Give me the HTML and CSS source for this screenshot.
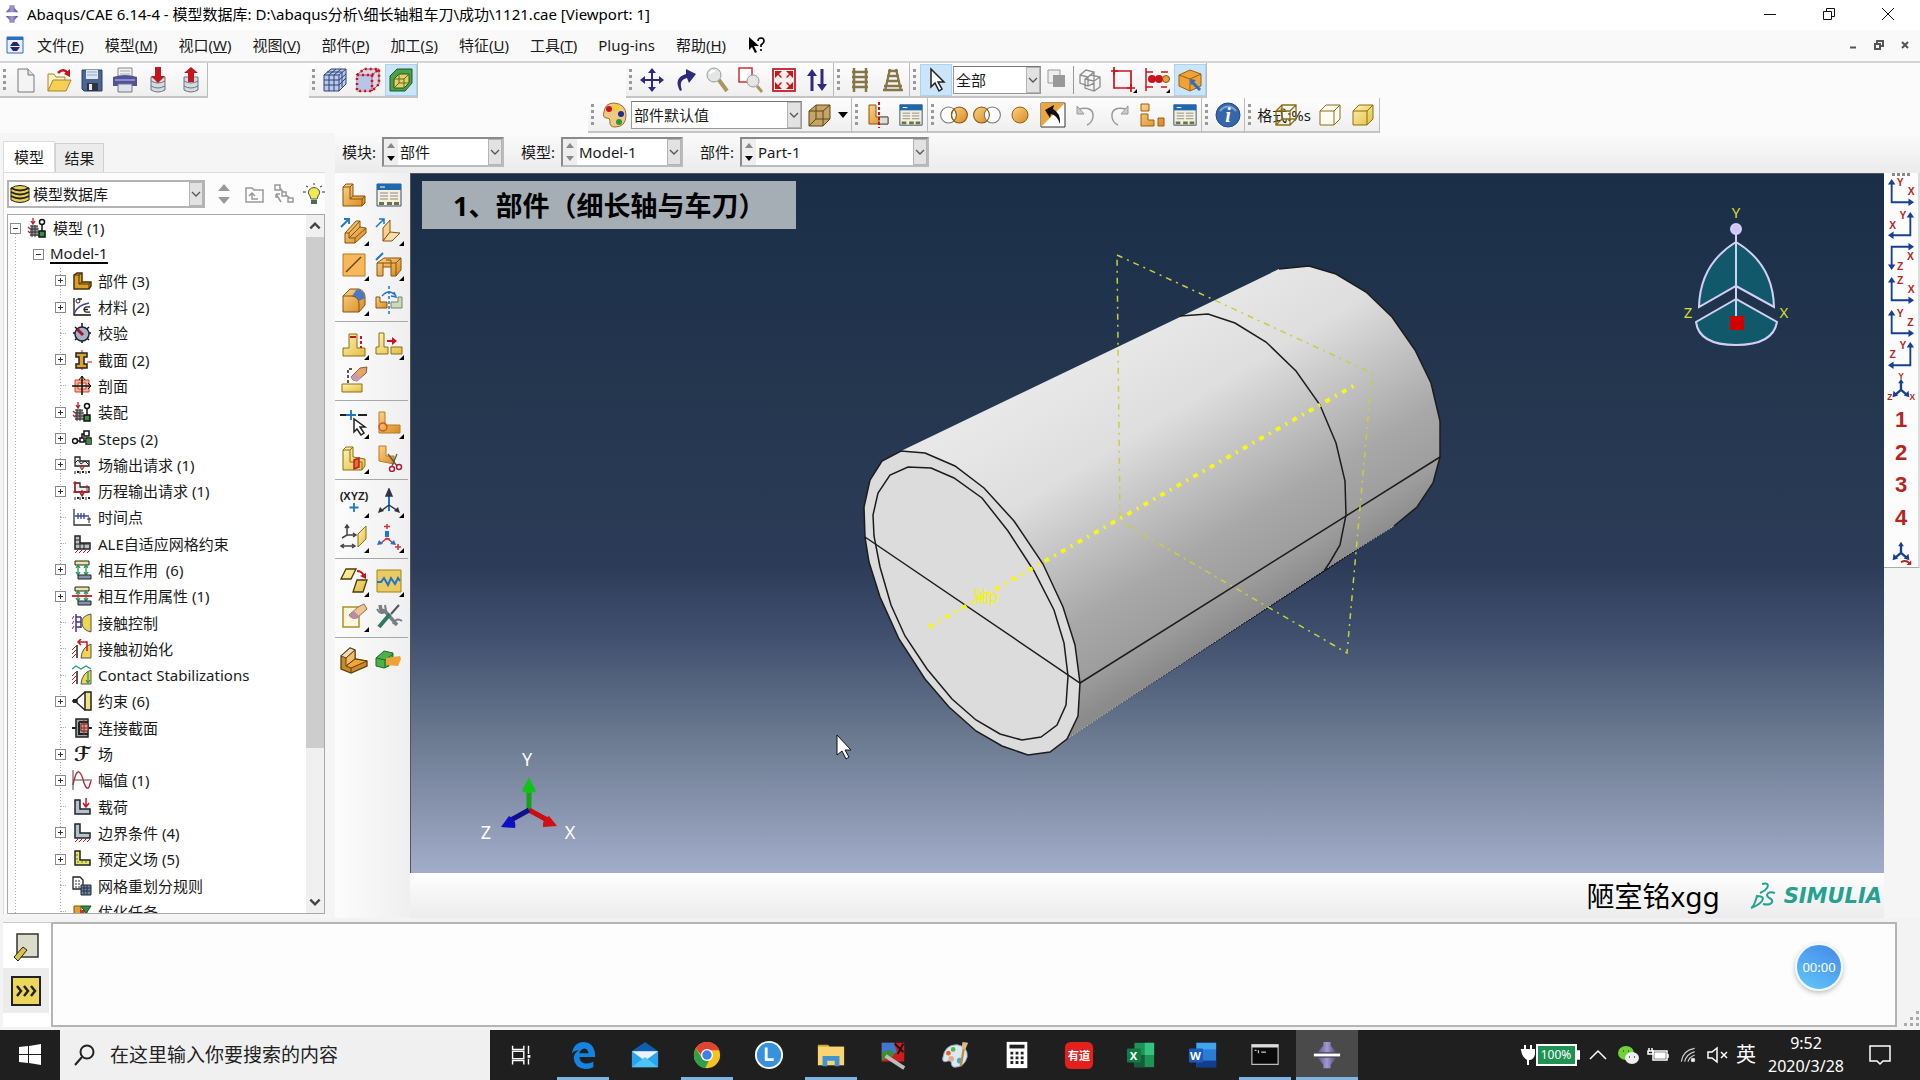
FILE: index.html
```html
<!DOCTYPE html>
<html lang="zh-CN">
<head>
    <meta charset="UTF-8">
    <meta name="viewport" content="width=device-width, initial-scale=1.0">
    <title>Abaqus/CAE 6.14-4</title>
    <link rel="stylesheet" href="styles.css">
</head>
<body>
    <!-- icon sprite -->
    <svg class="sprite" aria-hidden="true">
        <defs>
            <linearGradient id="gold" x1="0" y1="0" x2="1" y2="1"><stop offset="0" stop-color="#fbd38a"/><stop offset="1" stop-color="#d98a1e"/></linearGradient>
            <linearGradient id="yel" x1="0" y1="0" x2="1" y2="1"><stop offset="0" stop-color="#fdf3b0"/><stop offset="1" stop-color="#e3bd45"/></linearGradient>
            <linearGradient id="purple" x1="0" y1="0" x2="1" y2="0"><stop offset="0" stop-color="#5a5390"/><stop offset=".5" stop-color="#a29bd0"/><stop offset="1" stop-color="#4d4780"/></linearGradient>
        </defs>
        <symbol id="abaqus" viewBox="0 0 32 32"><path d="M12 2h8v4l6 7H6l6-7zM6 19h20l-6 7v4h-8v-4l-6-7z" fill="url(#purple)"/><path d="M2 14.500h28v3H2z" class="bar"/></symbol>
        <symbol id="doc-app" viewBox="0 0 18 18"><path d="M1 1h16v16H1z" fill="#e8f0fa" stroke="#2b6cc4"/><path d="M1 1h16v3H1z" fill="#2b6cc4"/><path d="M7 6h4l3 4H4zM4 11h10l-3 4H7z" fill="#2b2670"/></symbol>
        <!-- file toolbar -->
        <symbol id="new" viewBox="0 0 26 26"><path d="M5 2h10l6 6v17H5z" fill="#f4f4f4" stroke="#777"/><path d="M15 2v6h6" fill="#ddd" stroke="#777"/></symbol>
        <symbol id="open" viewBox="0 0 26 26"><path d="M2 24V7h6l2 3h9v4" fill="#fff3c0" stroke="#a78430"/><path d="M2 24l5-11h18l-5 11z" fill="#f6cf55" stroke="#a78430"/><path d="M12 6q6-6 10 1" fill="none" stroke="#c8141c" stroke-width="2.500"/><path d="M24 2v8l-6-3z" fill="#c8141c"/></symbol>
        <symbol id="save" viewBox="0 0 26 26"><path d="M3 3h20v21H5l-2-2z" fill="#4a6494" stroke="#2c3f66"/><path d="M7 3h12v9H7z" fill="#dde6ef"/><path d="M8 5h10M8 8h10" stroke="#8fa5c0"/><path d="M8 16h11v8H8z" fill="#2b3345"/><path d="M10 17h3v6h-3z" fill="#e8e8e8"/></symbol>
        <symbol id="print" viewBox="0 0 26 26"><path d="M6 1h14v10H6z" fill="#f3f3f3" stroke="#888"/><path d="M8 4h10M8 7h10" stroke="#aaa"/><path d="M1 10q12-4 24 0v9H1z" fill="#50539a"/><path d="M3 12h20v2H3z" fill="#8a8dc6"/><path d="M6 17h14v8H6z" fill="#dfe3ef" stroke="#777"/></symbol>
        <symbol id="disk" viewBox="0 0 26 26"><path d="M6 10h14v13q-7 4-14 0z" fill="#d5dae0" stroke="#6b7480"/><path d="M6 14q7 4 14 0M6 19q7 4 14 0" fill="none" stroke="#6b7480"/></symbol>
        <symbol id="db-in" viewBox="0 0 26 26"><use href="#disk"/><path d="M10 0h6v9h4l-7 7-7-7h4z" fill="#c4161c"/></symbol>
        <symbol id="db-out" viewBox="0 0 26 26"><use href="#disk"/><path d="M13 0l7 6h-4v9h-6V6H6z" fill="#c4161c"/></symbol>
        <symbol id="mesh-cube" viewBox="0 0 26 26"><path d="M2 8l7-6h15v15l-7 7H2z" fill="#b9c9e8" stroke="#2d4379"/><path d="M2 8h15v16M17 8l7-6M7 8v16M12 8v16M2 13h15M2 18h15l7-7M7 8l7-6M12 8l7-6M5 5h15v15M17 13l7-6" fill="none" stroke="#2d4379"/></symbol>
        <symbol id="seed-cube" viewBox="0 0 26 26"><path d="M2 8l7-6h15v15l-7 7H2z" fill="#d8d6ea" stroke="#c2435a"/><path d="M2 8h15v16H2z" fill="#b7c6e6"/><path d="M2 8h15v16M17 8l7-6" fill="none" stroke="#c2435a"/><path d="M2 8l7-6h15v15l-7 7H2zM2 8h15v16M17 8l7-6" fill="none" stroke="#c4161c" stroke-width="2.500" stroke-dasharray="2 3"/></symbol>
        <symbol id="green-cube" viewBox="0 0 26 26"><path d="M2 9l7-7h15v14l-7 8H2z" fill="#4ba04b" stroke="#1d5a23"/><path d="M6 12l5-5h10v9l-5 5H6z" fill="#e6cf6a" stroke="#1d5a23"/><path d="M6 12h10v9M16 12l5-5M11 7v9h10M11 16l-5 5" fill="none" stroke="#5c6a20"/></symbol>
        <!-- view toolbar -->
        <symbol id="pan" viewBox="0 0 26 26"><path d="M13 1l4 5h-3v6h6V9l5 4-5 4v-3h-6v6h3l-4 5-4-5h3v-6H6v3l-5-4 5-4v3h6V6H9z" fill="#2e2a7d"/></symbol>
        <symbol id="rotate" viewBox="0 0 26 26"><path d="M8 24Q1 11 14 7V2l10 5-7 9-2-5q-9 2-5 12z" fill="#2e2a7d"/></symbol>
        <symbol id="lens" viewBox="0 0 26 26"><path d="M14 13l8 11" stroke="#a8985c" stroke-width="4"/><circle cx="9" cy="8" r="7" fill="#e4e6e6" stroke="#999"/><path d="M5 7q1-3 5-3" stroke="#fff" stroke-width="2" fill="none"/></symbol>
        <symbol id="zoom-box" viewBox="0 0 26 26"><path d="M1 1h13v14H1z" fill="#fff" stroke="#c8333a" stroke-width="1.500"/><path d="M19 19l5 6" stroke="#a8985c" stroke-width="3"/><circle cx="15" cy="14" r="6" fill="#e4e6e6" stroke="#999"/></symbol>
        <symbol id="fit" viewBox="0 0 26 26"><path d="M2 2h22v22H2z" fill="#fbeeee" stroke="#c8333a" stroke-width="2"/><path d="M4 4h7L8 7l3 3-1 1-3-3-3 3zM22 4v7l-3-3-3 3-1-1 3-3-3-3zM4 22v-7l3 3 3-3 1 1-3 3 3 3zM22 22h-7l3-3-3-3 1-1 3 3 3-3z" fill="#c8141c"/></symbol>
        <symbol id="updown" viewBox="0 0 26 26"><path d="M8 2l5 7H9.500v15h-3V9H3zM18 24l-5-7h3.500V2h3v15H23z" fill="#2e2a7d"/></symbol>
        <symbol id="ladder" viewBox="0 0 26 26"><path d="M7 1v24M19 1v24M5 5h16M5 10h16M5 15h16M5 20h16" stroke="#857647" stroke-width="2.500"/></symbol>
        <symbol id="persp" viewBox="0 0 26 26"><path d="M10 2L5 24M16 2l5 22M8 4h10M7 9h12M6 14h14M4 19h18M3 23h20" stroke="#857647" stroke-width="2.300"/></symbol>
        <symbol id="arrow" viewBox="0 0 26 26"><path d="M8 2v18l4-4 4 8 3-2-4-7h6z" fill="#fff" stroke="#222" stroke-width="1.500"/></symbol>
        <symbol id="layers" viewBox="0 0 26 26"><path d="M4 3h12v13H4z" fill="#eee" stroke="#999"/><path d="M9 8h12v12H9z" fill="#999"/></symbol>
        <symbol id="grey-cube" viewBox="0 0 26 26"><path d="M2 8l6-5 8 2v11l-6 3-8-3zM2 8l8 2v9M10 10l6-5M7 12l6-4 9 2v10l-6 4-9-3zM7 12l9 2v10M16 14l6-4" fill="none" stroke="#8c8c8c" stroke-width="1.300"/></symbol>
        <symbol id="sel-box" viewBox="0 0 26 26"><path d="M3 4h17v17H3z" fill="none" stroke="#c8141c" stroke-width="1.700"/><path d="M3 0v8M-1 4h8M20 17v8M16 21h8" stroke="#c8141c" stroke-width="1.700"/><path d="M26 22v4h-4z"/></symbol>
        <symbol id="sel-pts" viewBox="0 0 26 26"><path d="M2 1v23M2 5h7M17 5h7M2 20h7M17 20h6" stroke="#c8141c" stroke-width="1.500"/><circle cx="8" cy="12" r="4" fill="#c8141c"/><circle cx="15" cy="12" r="4" fill="#c8141c"/><circle cx="22" cy="12" r="3.500" fill="#e5a03c" stroke="#7c5116"/><path d="M26 22v4h-4z"/></symbol>
        <symbol id="gold-cube" viewBox="0 0 26 26"><path d="M2 8l11-5 11 4v12l-11 5-11-5z" fill="#efa237" stroke="#9a5f12"/><path d="M2 8l11 4 11-5M13 12v12" fill="none" stroke="#9a5f12"/><path d="M23 23l-8-8" stroke="#2b6cc4" stroke-width="3"/><path d="M13 12l6 1-5 5z" fill="#2b6cc4"/></symbol>
        <!-- colour and display toolbar -->
        <symbol id="palette" viewBox="0 0 26 26"><path d="M3 10Q4 1 13 1q12 1 12 12 0 12-11 12-6 0-5-6 0-3-3-3-5 0-3-6z" fill="#efc886" stroke="#9b6d2d"/><circle cx="8" cy="7" r="3" fill="#c8141c"/><circle cx="15" cy="6" r="3" fill="#f0d21c"/><circle cx="20" cy="12" r="3" fill="#1f2d8a"/><circle cx="18" cy="20" r="3" fill="#2e9a35"/></symbol>
        <symbol id="tan-cube" viewBox="0 0 26 26"><path d="M3 9l7-6h14v14l-7 7H3z" fill="#c5a468" stroke="#5f4517"/><path d="M3 9h14v15M17 9l7-6M10 3v14h14M10 17l-7 7" fill="none" stroke="#5f4517"/></symbol>
        <symbol id="part-cut" viewBox="0 0 26 26"><path d="M4 3h7v12h12v7H4z" fill="url(#gold)" stroke="#85540f"/><path d="M14 15h9v7h-9z" fill="#ddd" stroke="#555"/><path d="M14 0v26" stroke="#c8141c" stroke-width="2" stroke-dasharray="3 2"/></symbol>
        <symbol id="table" viewBox="0 0 28 26"><path d="M2 2h24v22H2z" fill="#f4f1d8" stroke="#34506b"/><path d="M2 2h24v6H2z" fill="#1d68b0"/><path d="M5 5h5" stroke="#fff"/><path d="M5 11h8M15 11h8M5 14h8M15 14h8M5 17h8M15 17h8" stroke="#889"/><path d="M4 20h5v3H4zM12 20h5v3h-5zM19 20h5v3h-5z" fill="#6d7048"/></symbol>
        <symbol id="bool-r" viewBox="0 0 28 26"><circle cx="9" cy="13" r="7.500" fill="#fff" stroke="#777"/><circle cx="19" cy="13" r="7.500" fill="url(#gold)" stroke="#85540f"/><path d="M14 7.500q4.500 5.500 0 11-4.500-5.500 0-11" fill="#fff" stroke="#85540f"/></symbol>
        <symbol id="bool-l" viewBox="0 0 28 26"><circle cx="9" cy="13" r="7.500" fill="url(#gold)" stroke="#85540f"/><circle cx="19" cy="13" r="7.500" fill="#fff" stroke="#777"/><path d="M14 7.500q4.500 5.500 0 11" fill="none" stroke="#85540f"/></symbol>
        <symbol id="ball" viewBox="0 0 26 26"><circle cx="13" cy="13" r="8" fill="url(#gold)" stroke="#9a5f12"/></symbol>
        <symbol id="swap" viewBox="0 0 26 26"><path d="M1 1h24v24H1z" fill="#fff" stroke="#333"/><path d="M1 1h24L1 25z" fill="#eda53c"/><path d="M5 8l9-5-1 4q8 4 7 15-3-9-9-10l-1 4z" fill="#111"/></symbol>
        <symbol id="undo" viewBox="0 0 26 26"><path d="M6 7q15-3 14 8-1 6-6 8" fill="none" stroke="#999" stroke-width="1.500"/><path d="M4 4v8h7z" fill="#ccc" stroke="#999"/></symbol>
        <symbol id="redo" viewBox="0 0 26 26"><path d="M20 7Q5 4 6 15q1 6 6 8" fill="none" stroke="#999" stroke-width="1.500"/><path d="M22 4v8h-7z" fill="#ccc" stroke="#999"/></symbol>
        <symbol id="blocks" viewBox="0 0 26 26"><path d="M2 2h8v7H2zM2 12h7v6h6v6H2zM19 16h6v8h-6z" fill="url(#gold)" stroke="#9a5f12"/></symbol>
        <symbol id="info" viewBox="0 0 26 26"><circle cx="13" cy="13" r="12" fill="#3566ac" stroke="#214a86"/><path d="M5 9q8-9 16 0" fill="none" stroke="#7fa4d8" stroke-width="2"/></symbol>
        <symbol id="wire-gold" viewBox="0 0 26 26"><path d="M3 9l6-6h14v14l-6 6H3zM3 9h14v14M17 9l6-6M9 3v14h14M9 17l-6 6" fill="none" stroke="#8c6f10" stroke-width="1.300"/></symbol>
        <symbol id="white-cube" viewBox="0 0 26 26"><path d="M3 9l6-6h14v14l-6 6H3z" fill="#fdfdf3" stroke="#8c6f10"/><path d="M3 9h14v14M17 9l6-6" fill="none" stroke="#8c6f10"/></symbol>
        <symbol id="yel-cube" viewBox="0 0 26 26"><path d="M3 9l6-6h14v14l-6 6H3z" fill="url(#yel)" stroke="#8c6f10"/><path d="M3 9h14v14M17 9l6-6" fill="none" stroke="#8c6f10"/></symbol>
        <!-- left tree -->
        <symbol id="db" viewBox="0 0 22 22"><path d="M2 5q9-5 18 0v12q-9 5-18 0z" fill="#e9d04e" stroke="#222"/><path d="M2 5q9 5 18 0M2 9q9 5 18 0M2 13q9 5 18 0" fill="none" stroke="#222" stroke-width="1.800"/></symbol>
        <symbol id="folder-up" viewBox="0 0 22 22"><path d="M3 19V5h6l2 2h9v12z" fill="none" stroke="#999" stroke-width="1.500"/><path d="M15 16H9v-5M6 13l3-3 3 3" fill="none" stroke="#999" stroke-width="1.500"/></symbol>
        <symbol id="nodes" viewBox="0 0 22 22"><path d="M2 2h5v5H2zM9 9h4v4H9zM15 15h5v4h-5zM7 5l3 4M13 12l4 3M3 11l5 8M3 11v4M3 11h4" fill="none" stroke="#999" stroke-width="1.500"/></symbol>
        <symbol id="bulb" viewBox="0 0 22 22"><path d="M7 13q-3-3-1-6 5-5 10 0 2 3-1 6l-1 3H8z" fill="#f2ea52" stroke="#555"/><path d="M8 17h6v4H8z" fill="#4c6b57"/><path d="M11 0v2M3 3l2 1M19 3l-2 1M0 9h3M19 9h3" stroke="#333"/></symbol>
        <symbol id="i-asm" viewBox="0 0 20 20"><path d="M5 8h6v10H3v-8z" fill="#999"/><path d="M3 8h8M3 11h9M3 14h9M3 17h9M5 7v12M8 7v12" stroke="#333"/><path d="M6 0v5M4 3l2 3 2-3M1 9l2 2M1 13l2 2" stroke="#b3202b" fill="none" stroke-width="1.300"/><path d="M12 13h6v6h-6z" fill="#3d8a44" stroke="#111" stroke-width="1.500"/><path d="M15 7v6" stroke="#111" stroke-width="1.500"/><circle cx="15" cy="4" r="2.500" fill="#fff" stroke="#111" stroke-width="1.500"/></symbol>
        <symbol id="i-part" viewBox="0 0 20 20"><path d="M2 4l3-2h5v9h9v4l-2 3H2z" fill="#d9a02c" stroke="#4b3206" stroke-width="1.500"/><path d="M2 4h5v9h10v5M7 4l3-2M7 13l3-2M17 13l2-2" fill="none" stroke="#4b3206"/></symbol>
        <symbol id="i-mat" viewBox="0 0 20 20"><path d="M2 1v17h17" fill="none" stroke="#111" stroke-width="1.300"/><path d="M2 17Q5 8 17 6" fill="none" stroke="#38449a" stroke-width="1.300"/><circle cx="6" cy="4" r="2" fill="none" stroke="#222"/><path d="M6 2h4M18 10q-6-1-6 2.500t6 2.500M12 12.500h4" fill="none" stroke="#222" stroke-width="1.300"/></symbol>
        <symbol id="i-cal" viewBox="0 0 20 20"><path d="M10 0v20M1 10h18M3 4l14 13M17 4L3 17" stroke="#111" stroke-width="1.500"/><circle cx="10" cy="11" r="7" fill="#a7b1c6" stroke="#1d2333" stroke-width="1.500"/><path d="M5 6l6 6" stroke="#a01430" stroke-width="3"/></symbol>
        <symbol id="i-sec" viewBox="0 0 20 20"><path d="M10 0v20M15 12h5" stroke="#c8141c"/><path d="M4 3h11v4h-3v7h3v4H4v-4h3V7H4z" fill="#dfa22f" stroke="#222" stroke-width="1.500"/></symbol>
        <symbol id="i-prof" viewBox="0 0 20 20"><path d="M3 4h14v12H3z" fill="#f7b29b" stroke="#d0452a"/><path d="M6 7h8v6H6z" fill="#f7dccf" stroke="#d0452a"/><path d="M10 0v19M0 10h19" stroke="#111" stroke-width="1.500"/><path d="M7 4l3-4 3 4M16 7l3 3-3 3" fill="none" stroke="#111"/></symbol>
        <symbol id="i-steps" viewBox="0 0 20 20"><circle cx="3" cy="12" r="2.500" fill="#fff" stroke="#111" stroke-width="1.500"/><path d="M6 12h2M8 9h4v4H8zM10 9V5h2M12 2h5v5h-5zM12 12h2M14 9h5v6h-5z" fill="none" stroke="#111" stroke-width="1.500"/><path d="M15 10h4v5h-4z" fill="#3d8a44"/></symbol>
        <symbol id="i-field" viewBox="0 0 20 20"><path d="M3 2h5v4h9v5H3z" fill="#eee" stroke="#222" stroke-width="1.300"/><path d="M3 8l3-3 3 4 4-3 4 4" fill="none" stroke="#222"/><path d="M10 10v4M8 12l2 3 2-3" stroke="#c8141c" fill="none"/><path d="M3 16v3M8 16v3M14 16v3" stroke="#222"/><path d="M5 17h2M10 17h2M16 17h2" stroke="#222" stroke-width="2"/></symbol>
        <symbol id="i-hist" viewBox="0 0 20 20"><path d="M3 2h5v4h9v5H3z" fill="#eee" stroke="#222" stroke-width="1.300"/><path d="M1 2h5M3 0v12M1 11h16M15 4v8" stroke="#c8141c"/><path d="M10 9v6M8 12l2 3 2-3" stroke="#c8141c" fill="none" stroke-width="1.300"/><path d="M3 16v3M8 16v3M14 16v3" stroke="#222"/><path d="M5 17h2M10 17h2M16 17h2" stroke="#222" stroke-width="2"/></symbol>
        <symbol id="i-time" viewBox="0 0 20 20"><path d="M2 2v16h17" fill="none" stroke="#333" stroke-width="1.300"/><path d="M3 9h14M6 6v6M9 6v6M12 6v6" stroke="#38449a" stroke-width="1.300"/><path d="M17 10v6M15 12h4" stroke="#222"/></symbol>
        <symbol id="i-ale" viewBox="0 0 20 20"><path d="M3 2h5v7h10v6H3z" fill="#b9c0c8" stroke="#222" stroke-width="1.500"/><path d="M3 6h5M3 10h14M8 9v6M12 9v6" stroke="#222"/><path d="M3 19l3-3M7 19l3-3M11 19l3-3M15 19l3-3" stroke="#c8141c"/></symbol>
        <symbol id="i-int" viewBox="0 0 20 20"><path d="M3 1h14v4H3z" fill="#efe3a5" stroke="#222"/><path d="M6 5v10M14 5v10M4 8l2-3 2 3M12 8l2-3 2 3M4 12l2 3 2-3M12 12l2 3 2-3" stroke="#1f9a54" fill="none" stroke-width="1.300"/><path d="M6 15h13v4H6z" fill="#7f93ad" stroke="#222"/></symbol>
        <symbol id="i-intp" viewBox="0 0 20 20"><use href="#i-int"/><path d="M0 10h20" stroke="#c8333a" stroke-width="2"/></symbol>
        <symbol id="i-cctl" viewBox="0 0 20 20"><path d="M2 3L0 6M2 8l-2 3M2 13l-2 3" stroke="#c8141c"/><path d="M4 1v18M4 4h5M4 9h5M4 14h5M9 4v11" stroke="#40368f" stroke-width="1.500"/><path d="M19 1q-10 2-9 9 0 7 9 9z" fill="#efd64c" stroke="#555"/></symbol>
        <symbol id="i-cinit" viewBox="0 0 20 20"><path d="M4 7l-4 4M4 11l-4 4M4 15l-4 4" stroke="#c8141c"/><path d="M5 6v13" stroke="#222" stroke-width="1.500"/><path d="M19 5q-9 3-10 14h10z" fill="#efd64c" stroke="#555"/><path d="M15 12V3H6M9 0L6 3l3 3" fill="none" stroke="#c8141c" stroke-width="1.500"/></symbol>
        <symbol id="i-cstab" viewBox="0 0 20 20"><path d="M4 7l-4 4M4 11l-4 4M4 15l-4 4" stroke="#c8141c"/><path d="M5 6v13" stroke="#222" stroke-width="1.500"/><path d="M19 5q-9 3-10 14h10z" fill="#efd64c" stroke="#555"/><path d="M0 4l4-3 5 3 5-3 5 3M16 6v12M14 15l2 3 2-3" fill="none" stroke="#2a9a6c" stroke-width="1.300"/></symbol>
        <symbol id="i-con" viewBox="0 0 20 20"><path d="M13 1h6v18h-6z" fill="#f0e57c" stroke="#222" stroke-width="1.500"/><path d="M13 1L5 8v4l8 7M0 10h5" fill="none" stroke="#222" stroke-width="1.500"/><path d="M1 8h4v4H1z" fill="#222"/></symbol>
        <symbol id="i-conn" viewBox="0 0 20 20"><path d="M4 1h12v18H4z" fill="#9ba7a8" stroke="#222" stroke-width="1.500"/><path d="M0 10h4M16 10h4M7 4h9M7 4v12h9" stroke="#222" stroke-width="2" fill="none"/><path d="M9 6h7v7H9z" fill="#c9a096" stroke="#7a1a14"/><path d="M12 2v15M9 10h8" stroke="#a02018"/></symbol>
        <symbol id="i-amp" viewBox="0 0 20 20"><path d="M1 0v20M1 10h19" stroke="#444"/><path d="M1 15Q4 0 7 2q3 2 5 11 3 8 5 4l2-6" fill="none" stroke="#b5303e" stroke-width="1.500"/></symbol>
        <symbol id="i-load" viewBox="0 0 20 20"><path d="M3 3h5v9h10v5H3z" fill="#b4c2cf" stroke="#222" stroke-width="1.500"/><path d="M14 1v8M11 6l3 4 3-4" fill="none" stroke="#c8141c" stroke-width="1.500"/></symbol>
        <symbol id="i-bc" viewBox="0 0 20 20"><path d="M3 1h5v9h10v5H3z" fill="#b4c2cf" stroke="#222" stroke-width="1.500"/><path d="M3 19l3-3M7 19l3-3M11 19l3-3M15 19l3-3" stroke="#c8141c"/></symbol>
        <symbol id="i-pre" viewBox="0 0 20 20"><path d="M3 2h5v9h10v5H3z" fill="#e8e36a" stroke="#222" stroke-width="1.500"/><path d="M5 5v8h10" fill="none" stroke="#3d8a44" stroke-dasharray="2 2"/></symbol>
        <symbol id="i-remesh" viewBox="0 0 20 20"><path d="M1 1h7l3 3v9H1z" fill="#fff" stroke="#222" stroke-width="1.300"/><path d="M3 5h6M3 8h6M3 11h6" stroke="#333" stroke-dasharray="2 1"/><path d="M9 9h10v10H9z" fill="#6f86a6" stroke="#222"/><path d="M9 12h10M9 15h10M12 9v10M15 9v10" stroke="#23304a"/></symbol>
        <symbol id="i-opt" viewBox="0 0 20 20"><path d="M2 4h7v16H2z" fill="#dfa22f" stroke="#8a4d0b"/><path d="M8 8v12h4V8z" fill="#c8333a"/><path d="M9 4h10l-4 6v10h-2V10z" fill="#3d8a44" stroke="#1c4a22"/></symbol>
        <!-- toolbox -->
        <symbol id="b-part" viewBox="0 0 28 28"><path d="M3 6l3-3h7v12h12v7l-3 3H3z" fill="url(#gold)" stroke="#85540f"/><path d="M3 6h7v12h12v7M10 6l3-3M10 18l3-3M22 18l3-3" fill="none" stroke="#85540f"/></symbol>
        <symbol id="b-ext" viewBox="0 0 28 28"><path d="M5 17l11-12h4v6l6 1v5L15 27H5z" fill="url(#gold)" stroke="#85540f"/><path d="M5 17h4v5h6v5M9 17l11-12M9 22L20 11M15 22l11-10" fill="none" stroke="#85540f"/><path d="M1 11l8-8M4 3h5v5" fill="none" stroke="#1e76c8" stroke-width="1.800"/></symbol>
        <symbol id="b-shell" viewBox="0 0 28 28"><path d="M8 12l7-8v12l-7 9z" fill="#f8d090" stroke="#85540f"/><path d="M8 25l7-9 10 1-8 8z" fill="#fbdcac" stroke="#85540f"/><path d="M1 11l8-8M4 3h5v5" fill="none" stroke="#1e76c8" stroke-width="1.500"/></symbol>
        <symbol id="b-wire" viewBox="0 0 28 28"><path d="M3 3h22v22H3z" fill="#f6b85a" stroke="#b87a25"/><path d="M6 21L21 6" stroke="#6b4410" stroke-width="1.500"/></symbol>
        <symbol id="b-cut" viewBox="0 0 28 28"><path d="M2 12l7-5h17v12l-5 6h-5v-9H8v9H2z" fill="url(#gold)" stroke="#85540f"/><path d="M2 12h19v13M21 12l5-5M8 16V12M16 16V9h-5" fill="none" stroke="#85540f"/><path d="M1 9l7-7" stroke="#1e76c8" stroke-width="2"/></symbol>
        <symbol id="b-round" viewBox="0 0 28 28"><path d="M3 10l7-7h9q6 2 6 8v8l-6 7H3z" fill="url(#gold)" stroke="#85540f"/><path d="M12 10l5-7q7 1 8 9l-6 3q-2-4-7-5z" fill="#4c78c8"/><path d="M3 10h9q7 1 7 8v8" fill="none" stroke="#85540f"/></symbol>
        <symbol id="b-mirror" viewBox="0 0 28 28"><path d="M1 11h4v5h7v6H1z" fill="url(#gold)" stroke="#85540f"/><path d="M27 11h-4v5h-7v6h11z" fill="#cfd8b8" stroke="#6a8a6a"/><path d="M14 0v28" stroke="#1e76c8" stroke-width="1.500" stroke-dasharray="3 2"/><path d="M7 10q7-8 14 0M19 6l2 5-5-1" fill="none" stroke="#1e76c8" stroke-width="1.500"/></symbol>
        <symbol id="b-p1" viewBox="0 0 28 28"><path d="M9 4h8v14h8v8H3v-8h6z" fill="url(#yel)" stroke="#8c6f10"/><path d="M10 7h6" stroke="#c8141c" stroke-width="2"/><path d="M21 6v12" stroke="#c8141c" stroke-width="2" stroke-dasharray="3 2"/></symbol>
        <symbol id="b-p2" viewBox="0 0 28 28"><path d="M4 3h5v14h4v7H1v-7h3zM16 17h11v7H16z" fill="url(#yel)" stroke="#8c6f10"/><path d="M12 11h6" stroke="#c8141c" stroke-width="2"/><path d="M17 7l5 4-5 4z" fill="#c8141c"/></symbol>
        <symbol id="b-p3" viewBox="0 0 28 28"><path d="M2 19h20v8H2z" fill="url(#yel)" stroke="#8c6f10"/><path d="M8 18V4h6" fill="none" stroke="#222" stroke-dasharray="3 2" stroke-width="1.500"/><path d="M11 12l9-9 7-1-1 6-9 8q-5 0-6-4z" fill="#e9a468" stroke="#8a5a3a"/><path d="M11 12l5-4 5 5-4 3q-5 0-6-4z" fill="#c79ab8"/></symbol>
        <symbol id="b-datum" viewBox="0 0 28 28"><path d="M0 6h6M18 6h9" stroke="#222" stroke-width="1.800"/><path d="M11 1v10M6 6h10" stroke="#1e76c8" stroke-width="1.800"/><path d="M14 10v13l3-3 4 6 3-2-4-6h5z" fill="#fff" stroke="#222" stroke-width="1.500"/></symbol>
        <symbol id="b-fillet" viewBox="0 0 28 28"><path d="M4 3h6v13h15v8H4z" fill="url(#gold)" stroke="#b87a25"/><circle cx="8" cy="18" r="4" fill="none" stroke="#d0561e" stroke-width="1.500"/></symbol>
        <symbol id="b-lface" viewBox="0 0 28 28"><path d="M3 6l3-3h7v10l12 2v7l-3 4H3z" fill="url(#yel)" stroke="#8c6f10"/><path d="M3 6h7v12h12v8M10 6l3-3" fill="none" stroke="#8c6f10"/><path d="M14 16l5-2v9l-5 2z" fill="#e86a33" stroke="#b3202b" stroke-width="1.500"/></symbol>
        <symbol id="b-scis" viewBox="0 0 28 28"><path d="M4 2h7v10h8v8L4 17z" fill="url(#gold)" stroke="#b87a25"/><path d="M13 10l9 12M22 10l-5 12" stroke="#555" stroke-width="1.300"/><circle cx="17" cy="25" r="2.500" fill="none" stroke="#a8213c" stroke-width="1.500"/><circle cx="24" cy="23" r="2.500" fill="none" stroke="#a8213c" stroke-width="1.500"/></symbol>
        <symbol id="b-axis" viewBox="0 0 28 28"><path d="M14 3v20" stroke="#1e76c8" stroke-width="2"/><path d="M14 1l3 7h-6zM14 17L6 23M14 17l9 6" stroke="#334" stroke-width="1.500" fill="#334"/><path d="M3 25l2-6 4 4zM25 25l-2-6-4 4z" fill="#333"/></symbol>
        <symbol id="b-plane" viewBox="0 0 28 28"><path d="M7 12V4M7 12l-5 3M7 12h8M5 5l2-3 2 3M13 10l3 2-3 2M2 23h12M4 21l-3 2 3 2M12 21l3 2-3 2" stroke="#444" stroke-width="1.500" fill="none"/><path d="M18 11l8-8v13l-8 8z" fill="url(#yel)" stroke="#8c6f10"/></symbol>
        <symbol id="b-csys" viewBox="0 0 28 28"><path d="M12 1v5M9 3.500h6M10 16h5M20 24h6M23 21v6" stroke="#d8323c" stroke-width="1.500"/><path d="M12 8v6" stroke="#1e76c8" stroke-width="4"/><path d="M12 15L5 21M12 15l7 6" stroke="#d8323c" stroke-width="1.500"/><path d="M2 22l2-5 4 4zM21 22l-2-5-4 4z" fill="#1e76c8"/></symbol>
        <symbol id="b-copy" viewBox="0 0 28 28"><path d="M6 2h10l-5 10H1zM17 13h10l-4 12H13z" fill="url(#yel)" stroke="#4b3c06" stroke-width="1.300"/><path d="M17 4q5 0 7 5" fill="none" stroke="#c8141c" stroke-width="2"/><path d="M26 6v6l-6-3z" fill="#c8141c"/></symbol>
        <symbol id="b-wave" viewBox="0 0 28 28"><path d="M2 3h24v22H2z" fill="#ecca62" stroke="#a08020"/><path d="M2 15h4l3-4 4 7 3-7 4 6 3-6 2 3" fill="none" stroke="#1e76c8" stroke-width="2"/></symbol>
        <symbol id="b-erase" viewBox="0 0 28 28"><path d="M3 5h16v20H3z" fill="#fff8df" stroke="#b08d2b" stroke-width="1.500"/><path d="M9 13l9-8 6-3 3 5-10 9q-6 1-8-3z" fill="#edc68e" stroke="#98704a"/><path d="M9 13l5-4 5 5-3 3q-5 0-7-4z" fill="#b88ab0"/></symbol>
        <symbol id="b-tools" viewBox="0 0 28 28"><path d="M5 3l1 5 4 1 12 14" stroke="#777f85" stroke-width="3.500" fill="none"/><path d="M2 7q4 7 9 2l-1-6M18 22q3-7 9-3" stroke="#777f85" stroke-width="2" fill="none"/><path d="M24 3l-8 9" stroke="#555" stroke-width="2"/><path d="M15 12L4 25" stroke="#2f7a62" stroke-width="4"/></symbol>
        <symbol id="b-l3d" viewBox="0 0 28 28"><path d="M1 10l9-8 5 2v9l12 2v5L11 27 1 23z" fill="#c98a2b" stroke="#5f3f0c" stroke-width="1.300"/><path d="M1 10l9-8 5 2-9 8z" fill="#e9dcc0" stroke="#5f3f0c"/><path d="M6 12l9-8v9l-9 7z" fill="#f1bd6b" stroke="#5f3f0c"/><path d="M6 20l9-7 12 2-16 7z" fill="#f5a535" stroke="#5f3f0c"/><path d="M11 22v5" stroke="#5f3f0c"/></symbol>
        <symbol id="b-green" viewBox="0 0 28 28"><path d="M1 12l8-7 9 2v7l-4 1v5l-5 2-8-2z" fill="#4fb04a" stroke="#1f6a25"/><path d="M1 12l9 2v8M10 14l8-6" fill="none" stroke="#1f6a25"/><path d="M11 12l14-2 1 3-3 7-12-1z" fill="#efa237"/></symbol>
        <!-- view directions -->
        <symbol id="ax-ne" viewBox="0 0 30 30"><path d="M5 5v21h19" fill="none" stroke="#173f92" stroke-width="2"/><path d="M5 1l4 6H1zM29 26l-6 4v-8z" fill="#173f92"/></symbol>
        <symbol id="ax-nw" viewBox="0 0 30 30"><path d="M25 5v21H6" fill="none" stroke="#173f92" stroke-width="2"/><path d="M25 1l4 6h-8zM1 26l6 4v-8z" fill="#173f92"/></symbol>
        <symbol id="ax-se" viewBox="0 0 30 30"><path d="M5 25V4h19" fill="none" stroke="#173f92" stroke-width="2"/><path d="M5 29l4-6H1zM29 4l-6 4V0z" fill="#173f92"/></symbol>
        <symbol id="ax-iso" viewBox="0 0 30 30"><path d="M15 17V9M15 17l-6 5M15 17l6 5" stroke="#173f92" stroke-width="2.500"/><path d="M15 5l3 5h-6zM6 25l1-7 5 5zM24 25l-1-7-5 5z" fill="#173f92"/></symbol>
        <symbol id="chev" viewBox="0 0 12 12"><path d="M2 4l4 4 4-4" fill="none" stroke="#555" stroke-width="1.300"/></symbol>
        <symbol id="more" viewBox="0 0 5 5"><path d="M5 0v5H0z"/></symbol>
    </svg>

    <header class="titlebar">
        <svg class="app-icon dark"><use href="#abaqus"/></svg>
        <span>Abaqus/CAE 6.14-4 - 模型数据库: D:\abaqus分析\细长轴粗车刀\成功\1121.cae [Viewport: 1]</span>
        <div class="win-buttons">
            <button aria-label="最小化"><svg viewBox="0 0 14 14"><path d="M1 7.500h12"/></svg></button>
            <button aria-label="还原"><svg viewBox="0 0 14 14"><path d="M1.500 4.500h8v8h-8zM4.500 4V1.500h8v8H10"/></svg></button>
            <button aria-label="关闭"><svg viewBox="0 0 14 14"><path d="M1 1l12 12M13 1L1 13"/></svg></button>
        </div>
    </header>

    <nav class="menubar">
        <svg class="doc-icon"><use href="#doc-app"/></svg>
        <button>文件(<u>F</u>)</button>
        <button>模型(<u>M</u>)</button>
        <button>视口(<u>W</u>)</button>
        <button>视图(<u>V</u>)</button>
        <button>部件(<u>P</u>)</button>
        <button>加工(<u>S</u>)</button>
        <button>特征(<u>U</u>)</button>
        <button>工具(<u>T</u>)</button>
        <button>Plug-ins</button>
        <button>帮助(<u>H</u>)</button>
        <button aria-label="这是什么"><svg class="help-icon" viewBox="0 0 18 18"><path d="M2 1v13l3-3 3 6 2-1-3-6h5z"/><path d="M11 5q0-3 3-3t3 3q0 2-3 4v2M14 13v2" fill="none" stroke="#000" stroke-width="1.600"/></svg></button>
        <div class="mdi-buttons">
            <button aria-label="最小化视口"><svg viewBox="0 0 10 10"><path d="M2 7.500h6"/></svg></button>
            <button aria-label="还原视口"><svg viewBox="0 0 10 10"><path d="M1 4h5v5H1zM3 3V1h6v5H7"/></svg></button>
            <button aria-label="关闭视口"><svg viewBox="0 0 10 10"><path d="M2 2l6 6M8 2L2 8"/></svg></button>
        </div>
    </nav>

    <div class="toolbars">
        <div class="tool-row first-row">
            <div class="group">
                <i class="grip"></i>
                <button aria-label="新建"><svg><use href="#new"/></svg></button>
                <button aria-label="打开"><svg><use href="#open"/></svg></button>
                <button aria-label="保存"><svg><use href="#save"/></svg></button>
                <button aria-label="打印"><svg><use href="#print"/></svg></button>
                <button aria-label="导入"><svg><use href="#db-in"/></svg></button>
                <button aria-label="导出"><svg><use href="#db-out"/></svg></button>
            </div>
            <div class="group mesh-group">
                <i class="grip"></i>
                <button aria-label="网格"><svg><use href="#mesh-cube"/></svg></button>
                <button aria-label="种子"><svg><use href="#seed-cube"/></svg></button>
                <button class="on" aria-label="几何"><svg><use href="#green-cube"/></svg></button>
            </div>
            <div class="group view-group">
                <i class="grip"></i>
                <button aria-label="平移"><svg><use href="#pan"/></svg></button>
                <button aria-label="旋转"><svg><use href="#rotate"/></svg></button>
                <button aria-label="缩放"><svg><use href="#lens"/></svg></button>
                <button aria-label="框选缩放"><svg><use href="#zoom-box"/></svg></button>
                <button aria-label="适应窗口"><svg><use href="#fit"/></svg></button>
                <button aria-label="循环视图"><svg><use href="#updown"/></svg></button>
            </div>
            <div class="group">
                <i class="grip"></i>
                <button aria-label="平行"><svg><use href="#ladder"/></svg></button>
                <button aria-label="透视"><svg><use href="#persp"/></svg></button>
            </div>
            <div class="group">
                <i class="grip"></i>
                <button class="on" aria-label="选择"><svg><use href="#arrow"/></svg></button>
                <div class="combo sel-all">
                    <select aria-label="选择过滤"><option>全部</option></select>
                    <span class="drop"><svg><use href="#chev"/></svg></span>
                </div>
                <button class="slim" aria-label="图层"><svg><use href="#layers"/></svg></button>
                <i class="bar-line"></i>
                <button aria-label="内部实体"><svg><use href="#grey-cube"/></svg></button>
                <button aria-label="矩形选择"><svg><use href="#sel-box"/></svg></button>
                <button aria-label="点选择"><svg><use href="#sel-pts"/></svg></button>
                <button class="on" aria-label="实体选择"><svg><use href="#gold-cube"/></svg></button>
            </div>
        </div>
        <div class="tool-row second-row">
            <div class="group">
                <i class="grip"></i>
                <button aria-label="颜色"><svg><use href="#palette"/></svg></button>
                <div class="combo color-map">
                    <select aria-label="颜色映射"><option>部件默认值</option></select>
                    <span class="drop"><svg><use href="#chev"/></svg></span>
                </div>
                <button class="wide" aria-label="半透明"><svg><use href="#tan-cube"/></svg><svg class="tri" viewBox="0 0 10 6"><path d="M0 0h10L5 6z"/></svg></button>
            </div>
            <div class="group">
                <i class="grip"></i>
                <button aria-label="视图切割"><svg><use href="#part-cut"/></svg></button>
                <button aria-label="切割管理"><svg><use href="#table"/></svg></button>
            </div>
            <div class="group">
                <i class="grip"></i>
                <button aria-label="并集"><svg class="big"><use href="#bool-r"/></svg></button>
                <button aria-label="差集"><svg class="big"><use href="#bool-l"/></svg></button>
                <button aria-label="交集"><svg><use href="#ball"/></svg></button>
                <button aria-label="替换"><svg><use href="#swap"/></svg></button>
                <button aria-label="撤销"><svg><use href="#undo"/></svg></button>
                <button aria-label="重做"><svg><use href="#redo"/></svg></button>
                <button aria-label="显示组"><svg><use href="#blocks"/></svg></button>
                <button aria-label="显示组管理"><svg><use href="#table"/></svg></button>
            </div>
            <div class="group">
                <i class="grip"></i>
                <button aria-label="查询"><svg viewBox="0 0 26 26"><use href="#info"/><text x="13" y="20" text-anchor="middle" class="info-i">i</text></svg></button>
            </div>
            <div class="group">
                <i class="grip"></i>
                <button class="format">格式:%s<svg><use href="#wire-gold"/></svg></button>
                <button aria-label="隐藏线"><svg><use href="#white-cube"/></svg></button>
                <button aria-label="着色"><svg><use href="#yel-cube"/></svg></button>
            </div>
        </div>
    </div>

    <main>
        <aside>
            <div class="tabs">
                <button class="active">模型</button>
                <button>结果</button>
            </div>
            <div class="panel">
                <div class="db-row">
                    <div class="combo db-combo">
                        <svg><use href="#db"/></svg>
                        <select aria-label="数据库"><option>模型数据库</option></select>
                        <span class="drop"><svg><use href="#chev"/></svg></span>
                    </div>
                    <button aria-label="上下移动"><svg viewBox="0 0 22 22"><path d="M5 8h12l-6-7zM5 14h12l-6 7z" fill="#999"/></svg></button>
                    <button aria-label="上一级"><svg><use href="#folder-up"/></svg></button>
                    <button aria-label="链接"><svg><use href="#nodes"/></svg></button>
                    <button aria-label="提示"><svg><use href="#bulb"/></svg></button>
                </div>
                <div class="tree">
                    <ul>
                        <li class="root"><button class="box minus"></button><svg><use href="#i-asm"/></svg>模型 (1)</li>
                        <li class="model"><button class="box minus"></button><b>Model-1</b></li>
                        <li><button class="box"></button><svg><use href="#i-part"/></svg>部件 (3)</li>
                        <li><button class="box"></button><svg><use href="#i-mat"/></svg>材料 (2)</li>
                        <li><i></i><svg><use href="#i-cal"/></svg>校验</li>
                        <li><button class="box"></button><svg><use href="#i-sec"/></svg>截面 (2)</li>
                        <li><i></i><svg><use href="#i-prof"/></svg>剖面</li>
                        <li><button class="box"></button><svg><use href="#i-asm"/></svg>装配</li>
                        <li><button class="box"></button><svg><use href="#i-steps"/></svg>Steps (2)</li>
                        <li><button class="box"></button><svg><use href="#i-field"/></svg>场输出请求 (1)</li>
                        <li><button class="box"></button><svg><use href="#i-hist"/></svg>历程输出请求 (1)</li>
                        <li><i></i><svg><use href="#i-time"/></svg>时间点</li>
                        <li><i></i><svg><use href="#i-ale"/></svg>ALE自适应网格约束</li>
                        <li><button class="box"></button><svg><use href="#i-int"/></svg>相互作用 &nbsp;(6)</li>
                        <li><button class="box"></button><svg><use href="#i-intp"/></svg>相互作用属性 (1)</li>
                        <li><i></i><svg><use href="#i-cctl"/></svg>接触控制</li>
                        <li><i></i><svg><use href="#i-cinit"/></svg>接触初始化</li>
                        <li><i></i><svg><use href="#i-cstab"/></svg>Contact Stabilizations</li>
                        <li><button class="box"></button><svg><use href="#i-con"/></svg>约束 (6)</li>
                        <li><i></i><svg><use href="#i-conn"/></svg>连接截面</li>
                        <li><button class="box"></button><span class="script-f">ℱ</span>场</li>
                        <li><button class="box"></button><svg><use href="#i-amp"/></svg>幅值 (1)</li>
                        <li><i></i><svg><use href="#i-load"/></svg>载荷</li>
                        <li><button class="box"></button><svg><use href="#i-bc"/></svg>边界条件 (4)</li>
                        <li><button class="box"></button><svg><use href="#i-pre"/></svg>预定义场 (5)</li>
                        <li><i></i><svg><use href="#i-remesh"/></svg>网格重划分规则</li>
                        <li><i></i><svg><use href="#i-opt"/></svg>优化任务</li>
                    </ul>
                    <div class="scroll">
                        <button aria-label="向上"><svg viewBox="0 0 12 12"><path d="M2 8l4-4 4 4"/></svg></button>
                        <div class="thumb"></div>
                        <button aria-label="向下"><svg viewBox="0 0 12 12"><path d="M2 4l4 4 4-4"/></svg></button>
                    </div>
                </div>
            </div>
        </aside>

        <section class="work">
            <div class="context">
                <label for="module">模块:</label>
                <div class="combo framed">
                    <span class="spin"><svg viewBox="0 0 8 20"><path d="M0 6h8L4 1z" fill="#888"/><path d="M0 14h8l-4 5z"/></svg></span>
                    <select id="module"><option>部件</option></select>
                    <span class="drop"><svg><use href="#chev"/></svg></span>
                </div>
                <label for="model">模型:</label>
                <div class="combo framed">
                    <span class="spin"><svg viewBox="0 0 8 20"><path d="M0 6h8L4 1zM0 14h8l-4 5z" fill="#888"/></svg></span>
                    <select id="model"><option>Model-1</option></select>
                    <span class="drop"><svg><use href="#chev"/></svg></span>
                </div>
                <label for="part">部件:</label>
                <div class="combo framed part">
                    <span class="spin"><svg viewBox="0 0 8 20"><path d="M0 6h8L4 1z" fill="#888"/><path d="M0 14h8l-4 5z"/></svg></span>
                    <select id="part"><option>Part-1</option></select>
                    <span class="drop"><svg><use href="#chev"/></svg></span>
                </div>
            </div>

            <div class="stage">
                <div class="toolbox">
                    <div>
                        <button aria-label="创建部件"><svg><use href="#b-part"/></svg></button>
                        <button aria-label="部件管理"><svg><use href="#table"/></svg></button>
                        <button aria-label="拉伸实体"><svg><use href="#b-ext"/></svg><svg class="more"><use href="#more"/></svg></button>
                        <button aria-label="拉伸壳"><svg><use href="#b-shell"/></svg><svg class="more"><use href="#more"/></svg></button>
                        <button aria-label="创建线"><svg><use href="#b-wire"/></svg><svg class="more"><use href="#more"/></svg></button>
                        <button aria-label="拉伸切削"><svg><use href="#b-cut"/></svg><svg class="more"><use href="#more"/></svg></button>
                        <button aria-label="倒圆角"><svg><use href="#b-round"/></svg><svg class="more"><use href="#more"/></svg></button>
                        <button aria-label="镜像"><svg><use href="#b-mirror"/></svg></button>
                    </div>
                    <div>
                        <button aria-label="编辑特征"><svg><use href="#b-p1"/></svg><svg class="more"><use href="#more"/></svg></button>
                        <button aria-label="抑制特征"><svg><use href="#b-p2"/></svg><svg class="more"><use href="#more"/></svg></button>
                        <button aria-label="删除特征"><svg><use href="#b-p3"/></svg></button>
                    </div>
                    <div>
                        <button aria-label="分割边"><svg><use href="#b-datum"/></svg><svg class="more"><use href="#more"/></svg></button>
                        <button aria-label="分割面"><svg><use href="#b-fillet"/></svg><svg class="more"><use href="#more"/></svg></button>
                        <button aria-label="分割体"><svg><use href="#b-lface"/></svg><svg class="more"><use href="#more"/></svg></button>
                        <button aria-label="裁剪"><svg><use href="#b-scis"/></svg></button>
                    </div>
                    <div>
                        <button aria-label="基准点"><svg viewBox="0 0 28 28"><text x="14" y="12" text-anchor="middle" class="xyz">(XYZ)</text><path d="M14 15v9M9.500 19.500h9" stroke="#1e76c8" stroke-width="1.800"/></svg><svg class="more"><use href="#more"/></svg></button>
                        <button aria-label="基准轴"><svg><use href="#b-axis"/></svg><svg class="more"><use href="#more"/></svg></button>
                        <button aria-label="基准面"><svg><use href="#b-plane"/></svg><svg class="more"><use href="#more"/></svg></button>
                        <button aria-label="基准坐标系"><svg><use href="#b-csys"/></svg><svg class="more"><use href="#more"/></svg></button>
                    </div>
                    <div>
                        <button aria-label="偏移面"><svg><use href="#b-copy"/></svg><svg class="more"><use href="#more"/></svg></button>
                        <button aria-label="修复"><svg><use href="#b-wave"/></svg><svg class="more"><use href="#more"/></svg></button>
                        <button aria-label="删除面"><svg><use href="#b-erase"/></svg><svg class="more"><use href="#more"/></svg></button>
                        <button aria-label="几何工具"><svg><use href="#b-tools"/></svg></button>
                    </div>
                    <div>
                        <button aria-label="中面"><svg><use href="#b-l3d"/></svg></button>
                        <button aria-label="赋值厚度"><svg><use href="#b-green"/></svg></button>
                    </div>
                </div>

                <div class="view-col">
                    <div class="viewport">
                        <div class="caption">1、部件（细长轴与车刀）</div>
                        <svg class="scene" viewBox="0 0 1474 700">
                            <defs>
                                <linearGradient id="body" gradientUnits="userSpaceOnUse" x1="640" y1="205" x2="800" y2="470">
                                    <stop offset="0" stop-color="#e8e8e8"/>
                                    <stop offset=".3" stop-color="#dedede"/>
                                    <stop offset=".5" stop-color="#c4c4c4"/>
                                    <stop offset=".72" stop-color="#a8a8a8"/>
                                    <stop offset=".88" stop-color="#9e9e9e"/>
                                    <stop offset="1" stop-color="#8b8b8b"/>
                                </linearGradient>
                            </defs>
                            <!-- shaft -->
                            <path d="M491 278L770 144 869 96 899 93 926 101 956 119 982 144 1005 177 1021 210 1030 248 1030 284 1023 310 1007 334 984 353 916 396 657 566 560 450z" fill="url(#body)"/>
                            <path d="M869 96L899 93 926 101 956 119 982 144 1005 177 1021 210 1030 248 1030 284 1023 310 1007 334 984 353" class="edge"/>
                            <path d="M657 566L916 396 984 353" stroke="#c8ccd2" stroke-dasharray="1 2"/>
                            <path d="M515 280L545 293 574 315 604 348 633 391 653 434 665 472 670 510 668 543 657 566 640 579 618 582 592 573 566 558 539 534 515 506 489 466 470 424 459 389 455 364 454 334 460 307 472 288 491 278z" fill="#dcdcdc" class="edge"/>
                            <path d="M521 295L544 305 572 325 598 358 624 398 644 437 654 470 658 503 656 532 647 552 631 564 612 567 590 561 566 547 542 526 517 496 495 463 481 432 470 394 464 363 463 342 468 320 480 302 498 294z" class="edge"/>
                            <path d="M770 143L798 141 825 150 856 169 886 198 910 232 926 270 935 308 936 342 930 372 920 389 914 398" class="edge"/>
                            <path d="M455 364L670 510 1030 284" class="edge"/>
                            <!-- datum plane and axis -->
                            <path d="M707 82L962 200 937 480 710 348z" class="datum"/>
                            <path d="M519 454L945 212" class="axis"/>
                            <text x="563" y="429" class="rp">轴p</text>
                            <!-- view compass -->
                            <g class="compass">
                                <path d="M1326 69Q1290 91 1289 134L1326 113 1364 134Q1363 91 1326 69zM1326 126L1286 149Q1289 172 1326 172T1367 149z"/>
                                <path d="M1326 56v90M1326 69v44"/>
                                <circle cx="1326" cy="56" r="5"/>
                                <path d="M1320 143h14v14h-14z" class="handle"/>
                                <text x="1326" y="45">Y</text>
                                <text x="1278" y="145">Z</text>
                                <text x="1374" y="145">X</text>
                            </g>
                            <!-- triad -->
                            <g class="triad">
                                <path d="M119 637v-26" stroke="#12a316"/><path d="M119 604l7 14q-7 4-14 0z" fill="#0fc416"/>
                                <path d="M119 637l22 12" stroke="#c80e10"/><path d="M147 653l-14 1q-1-8 6-11z" fill="#d01012"/>
                                <path d="M119 637l-20 11" stroke="#10108c"/><path d="M91 654l14 1q2-8-6-12z" fill="#0f10c0"/>
                                <text x="117" y="593">Y</text>
                                <text x="76" y="666">Z</text>
                                <text x="160" y="666">X</text>
                            </g>
                            <path d="M427 562v20l5-4 4 8 3-2-4-7h6z" fill="#fff" stroke="#111"/>
                        </svg>
                    </div>
                    <div class="prompt">
                        <span class="mark">陋室铭xgg</span>
                        <svg class="ds" viewBox="0 0 28 28"><path d="M12 2q8-2 5 4-2 3-7 5M1 26q3-1 6-12 8 0 5 5-3 4-11 7M25 11q-7-2-8 2 0 2 4 4 3 3-1 5-3 1-7 0"/></svg>
                        <span class="simulia">SIMULIA</span>
                    </div>
                </div>

                <div class="views">
                    <i class="grip"></i>
                    <button aria-label="前视图"><svg viewBox="0 0 30 30"><use href="#ax-ne"/><text x="14" y="9">Y</text><text x="26" y="18">X</text></svg></button>
                    <button aria-label="后视图"><svg viewBox="0 0 30 30"><use href="#ax-nw"/><text x="17" y="9">Y</text><text x="6" y="19">X</text></svg></button>
                    <button aria-label="俯视图"><svg viewBox="0 0 30 30"><use href="#ax-se"/><text x="25" y="18">X</text><text x="14" y="29">Z</text></svg></button>
                    <button aria-label="仰视图"><svg viewBox="0 0 30 30"><use href="#ax-ne"/><text x="14" y="9">Z</text><text x="26" y="18">X</text></svg></button>
                    <button aria-label="左视图"><svg viewBox="0 0 30 30"><use href="#ax-ne"/><text x="14" y="9">Y</text><text x="25" y="18">Z</text></svg></button>
                    <button aria-label="右视图"><svg viewBox="0 0 30 30"><use href="#ax-nw"/><text x="17" y="9">Y</text><text x="6" y="18">Z</text></svg></button>
                    <button aria-label="等轴视图"><svg viewBox="0 0 30 30"><use href="#ax-iso"/><text x="15" y="5" class="tiny">Y</text><text x="3" y="28" class="tiny">Z</text><text x="27" y="28" class="tiny">X</text></svg></button>
                    <button>1</button>
                    <button>2</button>
                    <button>3</button>
                    <button>4</button>
                    <button aria-label="保存视图"><svg viewBox="0 0 30 30"><use href="#ax-iso"/><path d="M15 27q5-3 9 1" fill="none" stroke="#b3261e" stroke-width="2"/><path d="M26 25v5h-5z" fill="#b3261e"/></svg></button>
                </div>
            </div>
        </section>
    </main>

    <section class="messages">
        <div class="side-tabs">
            <button class="active" aria-label="消息"><svg viewBox="0 0 30 30"><path d="M6 3h21v23H6z" fill="#dcdccc" stroke="#333" stroke-width="1.500"/><path d="M3 26l9-10 4 3-9 11z" fill="#d6c542" stroke="#222"/></svg></button>
            <button aria-label="命令行"><svg viewBox="0 0 30 30"><path d="M1 1h28v28H1z" fill="#ecd75c" stroke="#222" stroke-width="2"/><path d="M6 10l4 5-4 5M13 10l4 5-4 5M20 10l4 5-4 5" fill="none" stroke="#222" stroke-width="2.500"/></svg></button>
        </div>
        <div class="log"></div>
        <svg class="resize" viewBox="0 0 16 16"><path d="M12 0h3v3h-3zM12 6h3v3h-3zM6 6h3v3H6zM12 12h3v3h-3zM6 12h3v3H6zM0 12h3v3H0z"/></svg>
        <div class="timer">00:00</div>
    </section>

    <footer class="taskbar">
        <button class="start" aria-label="开始"><svg viewBox="0 0 22 22"><path d="M0 3l9-1v8H0zM10 2l12-2v10H10zM0 11h9v8l-9-1zM10 11h12v10l-12-2z" fill="#fff"/></svg></button>
        <div class="search">
            <svg viewBox="0 0 22 22"><circle cx="13" cy="8" r="6.500"/><path d="M8 13l-7 8"/></svg>
            <input type="text" aria-label="搜索" placeholder="在这里输入你要搜索的内容">
        </div>
        <div class="apps">
            <button aria-label="任务视图"><svg viewBox="0 0 32 32"><path d="M7 6v4h12V6M7 26v-4h12v4M7 12h12v8H7zM24 6v9M24 20v6" fill="none" stroke="#fff" stroke-width="1.500"/><path d="M23 16h3v3h-3z" fill="#fff"/></svg></button>
            <button class="run" aria-label="Edge"><svg viewBox="0 0 32 32"><path d="M4 15Q6 2 17 2q12 1 12 16H12q1 7 8 7 4 0 7-2v6q-4 2-9 2Q7 30 6 19q1-6 6-8-6 0-8 4zm8-1h10q-1-5-5-5-4 1-5 5z" fill="#1583e0"/></svg></button>
            <button aria-label="邮件"><svg viewBox="0 0 32 32"><path d="M2 12L16 2l14 10z" fill="#0e5fae"/><path d="M2 12h28v17H2z" fill="#2aa5ec"/><path d="M2 12h28L16 22z" fill="#e9f3fb"/><path d="M2 29l14-11 14 11z" fill="#4dc4f5"/></svg></button>
            <button class="run" aria-label="Chrome"><svg viewBox="0 0 32 32"><circle cx="16" cy="16" r="14" fill="#f6c21c"/><path d="M4 9a14 14 0 0 1 25 2H16l-6 5z" fill="#e04234"/><path d="M4 9l7 11 7 2-4 8A14 14 0 0 1 4 9z" fill="#2da04e"/><circle cx="16" cy="16" r="6.500" fill="#fff"/><circle cx="16" cy="16" r="5" fill="#3f7fe8"/></svg></button>
            <button aria-label="L"><svg viewBox="0 0 32 32"><circle cx="16" cy="16" r="15" fill="#fff"/><circle cx="16" cy="16" r="13" fill="#3692dc"/><path d="M13 8v13h8" fill="none" stroke="#fff" stroke-width="3"/></svg></button>
            <button class="run" aria-label="文件资源管理器"><svg viewBox="0 0 32 32"><path d="M2 5h11l3 4H2z" fill="#d9a12a"/><path d="M2 7h28v20H2z" fill="#f8d573"/><path d="M7 17h18v11h-5v-6h-8v6H7z" fill="#3f93cf"/></svg></button>
            <button aria-label="屏幕工具"><svg viewBox="0 0 32 32"><path d="M4 3h24v20H4z" fill="#d01c1c"/><path d="M4 3h13l3 10-7 4H4z" fill="#3a7bd0"/><path d="M4 13l10-3 3 7-13 5z" fill="#3f8a32"/><path d="M18 4l9 9M27 4l-6 11" stroke="#111" stroke-width="2"/><path d="M8 17l20 13" stroke="#bcbcbc" stroke-width="4"/></svg></button>
            <button aria-label="画图"><svg viewBox="0 0 32 32"><path d="M3 19Q5 5 18 5q12 2 11 13-3 11-13 11-4 0-4-5-1-3-5-1-5 1-4-4z" fill="#dce8f0" stroke="#8aa5b8"/><circle cx="9" cy="14" r="2.500" fill="#e0632c"/><circle cx="14" cy="10" r="2.500" fill="#5ab544"/><circle cx="12" cy="20" r="3" fill="#e9a98c"/><circle cx="21" cy="22" r="3" fill="#48a4da"/><path d="M26 6l-4 22" stroke="#c58a3a" stroke-width="2.500"/><path d="M24 2l6 1-3 7-4-1z" fill="#d9b98a"/></svg></button>
            <button aria-label="计算器"><svg viewBox="0 0 32 32"><path d="M5 2h22v28H5z" fill="#fff"/><path d="M8 5h16v4H8z" fill="#222"/><path d="M9 14h14M9 19h14M9 24h14" stroke="#222" stroke-width="3" stroke-dasharray="3 2.500"/></svg></button>
            <button aria-label="有道"><svg viewBox="0 0 32 32"><rect x="1" y="2" width="30" height="29" rx="6" fill="#e2201c"/><text x="16" y="21" class="youdao">有道</text></svg></button>
            <button aria-label="Excel"><svg viewBox="0 0 32 32"><path d="M9 3h21v26H9z" fill="#1f9257"/><path d="M20 3h10v13H20z" fill="#36c281"/><path d="M9 16h11v13H9z" fill="#175c3a"/><rect x="1" y="9" width="15" height="15" rx="1" fill="#107c41"/><text x="8" y="21" class="office">X</text></svg></button>
            <button aria-label="Word"><svg viewBox="0 0 32 32"><path d="M9 3h21v26H9z" fill="#2b7cd3"/><path d="M9 3h21v7H9z" fill="#41a5ee"/><path d="M9 22h21v7H9z" fill="#103f91"/><rect x="1" y="9" width="15" height="15" rx="1" fill="#185abd"/><text x="8" y="21" class="office">W</text></svg></button>
            <button class="run" aria-label="命令提示符"><svg viewBox="0 0 32 32"><path d="M2 5h28v21H2z" fill="#0a0a0a" stroke="#bbb" stroke-width="1.300"/><path d="M2 5h28v3H2z" fill="#ddd"/><path d="M5 11h2M9 11v3M12 13h5" stroke="#ccc" stroke-width="1.300"/></svg></button>
            <button class="run current" aria-label="Abaqus"><svg><use href="#abaqus"/></svg></button>
        </div>
        <div class="tray">
            <svg class="battery" viewBox="0 0 60 24"><path d="M5 2v5M11 2v5M2 7h12v4q-1 5-5 5t-6-5zM8 15v7" fill="#fff" stroke="#fff" stroke-width="2"/><path d="M17 2h39v20H17z" fill="#1f9150" stroke="#fff" stroke-width="2"/><path d="M57 8h3v8h-3z" fill="#fff"/><text x="36" y="16" class="pct">100%</text></svg>
            <svg viewBox="0 0 24 24"><path d="M4 16l8-8 8 8"/></svg>
            <svg viewBox="0 0 24 24"><ellipse cx="10" cy="10" rx="8" ry="7" fill="#6fd235" stroke="none"/><ellipse cx="16" cy="15" rx="7" ry="6" fill="#eee" stroke="none"/><path d="M7 8h1M12 8h1M13 14h1M18 14h1" stroke="#444"/></svg>
            <svg viewBox="0 0 24 24"><path d="M7 8h14v9H7zM22 11v4"/><path d="M9 10h10v5H9z" fill="#fff"/><path d="M3 5v3M6 5v3M2 8h5v3H2z"/></svg>
            <svg viewBox="0 0 24 24" class="wifi"><path d="M4 20Q6 6 20 4M8 20q2-9 12-12M12 20q1-5 8-8"/><circle cx="18" cy="18" r="2" fill="#fff"/></svg>
            <svg viewBox="0 0 24 24"><path d="M2 9h4l5-4v14l-5-4H2zM15 9l6 6M21 9l-6 6"/></svg>
            <span class="ime">英</span>
            <div class="clock"><span>9:52</span><span>2020/3/28</span></div>
            <svg class="notice" viewBox="0 0 24 24"><path d="M2 3h20v15h-7l-3 3-3-3H2z"/></svg>
        </div>
    </footer>
</body>
</html>
```
FILE: styles.css
```css
* {
    box-sizing: border-box;
}

body {
    margin: 0;
    height: 100vh;
    display: flex;
    flex-direction: column;
    overflow: hidden;
    background: #f5f5f5;
    color: #1a1a1a;
    font-family: "Noto Sans", "Noto Sans CJK SC", sans-serif;
    font-size: 15px;
    line-height: 20px;
}

button, select, input {
    font: inherit;
    color: inherit;
}

button {
    display: flex;
    align-items: center;
    justify-content: center;
    padding: 0;
    border: none;
    background: none;
}

svg {
    display: block;
    flex: none;
}

.sprite {
    position: absolute;
    width: 0;
    height: 0;
}

.bar {
    fill: #fff;
}

.dark .bar {
    fill: #2b2650;
}

/* title and menu */
.titlebar {
    height: 30px;
    display: flex;
    align-items: center;
    gap: 5px;
    padding: 0 0 2px 2px;
    background: #fff;
    color: #000;
}

.app-icon {
    width: 20px;
    height: 20px;
}

.win-buttons {
    display: flex;
    margin-left: auto;
    padding-right: 3px;
}

.win-buttons button {
    width: 59px;
}

.win-buttons svg {
    width: 14px;
    height: 14px;
    fill: none;
    stroke: #111;
}

.menubar {
    height: 33px;
    display: flex;
    align-items: center;
    gap: 21px;
    padding: 0 2px 2px 6px;
    background: #f9f9f9;
    border-bottom: 2px solid #d4d4d4;
}

.doc-icon {
    width: 18px;
    height: 18px;
    margin-right: -8px;
}

.help-icon {
    width: 18px;
    height: 18px;
}

.mdi-buttons {
    display: flex;
    margin-left: auto;
}

.mdi-buttons button {
    width: 26px;
}

.mdi-buttons svg {
    width: 10px;
    height: 10px;
    fill: none;
    stroke: #555;
    stroke-width: 2;
}

/* toolbars */
.toolbars {
    background: #fbfbfb;
}

.tool-row {
    height: 35px;
    display: flex;
}

.second-row {
    padding-left: 588px;
}

.group {
    display: flex;
    align-items: center;
    gap: 1px;
    padding-left: 3px;
    background: linear-gradient(#fdfdfd, #efefef);
    border-right: 1px solid #bbb;
    border-bottom: 2px solid #c4c4c4;
}

.mesh-group {
    margin-left: 101px;
}

.view-group {
    margin-left: 208px;
}

.grip {
    width: 3px;
    height: 22px;
    margin-right: 3px;
    background: repeating-linear-gradient(#999 0 3px, transparent 3px 6px);
}

.group button {
    width: 32px;
    height: 32px;
}

.group svg {
    width: 26px;
    height: 26px;
}

.group svg.big {
    width: 30px;
    height: 28px;
}

.group .on {
    background: #cbe4f8;
    border: 1px solid #a9d3f3;
}

.group .slim {
    width: 30px;
}

.group .wide {
    width: 48px;
    gap: 6px;
}

.group .tri {
    width: 10px;
    height: 6px;
}

.group .format {
    position: relative;
    width: 58px;
}

.format svg {
    position: absolute;
    left: 18px;
    top: 3px;
}

.bar-line {
    width: 1px;
    height: 28px;
    background: #999;
}

.info-i {
    font: italic bold 20px "Liberation Serif", serif;
    fill: #fff;
}

/* drop-downs */
.combo {
    display: flex;
    align-items: stretch;
    height: 28px;
    background: #fff;
    border: 1px solid #999;
    border-top-color: #777;
}

.combo select {
    flex: 1;
    min-width: 0;
    padding: 0 2px;
    border: none;
    background: none;
    appearance: none;
}

.combo .drop {
    width: 14px;
    display: flex;
    align-items: center;
    justify-content: center;
    background: #e2e2e2;
    border: 1px solid #b4b4b4;
    pointer-events: none;
}

.combo .drop svg {
    width: 12px;
    height: 12px;
}

.sel-all {
    width: 88px;
}

.color-map {
    width: 171px;
}

/* left panel */
main {
    flex: 1;
    min-height: 0;
    display: flex;
}

aside {
    width: 325px;
    flex: none;
    display: flex;
    flex-direction: column;
    padding: 8px 0 4px 3px;
}

.tabs {
    display: flex;
    align-items: flex-end;
}

.tabs button {
    width: 49px;
    height: 29px;
    background: #ececec;
    border: 1px solid #d0d0d0;
    border-bottom: none;
}

.tabs .active {
    width: 52px;
    height: 31px;
    background: #fff;
    border-color: #ddd;
}

.panel {
    flex: 1;
    min-height: 0;
    display: flex;
    flex-direction: column;
    gap: 6px;
    padding: 7px 0 0 3px;
    background: #fcfcfc;
    border: 1px solid #ddd;
    border-right: none;
    border-bottom: none;
}

.db-row {
    display: flex;
    align-items: center;
    justify-content: space-between;
}

.db-combo {
    width: 198px;
    align-items: center;
    border-width: 2px;
    border-color: #b4b4b4;
}

.db-combo .drop {
    align-self: stretch;
}

.db-row svg {
    width: 22px;
    height: 22px;
}

.tree {
    flex: 1;
    min-height: 0;
    display: flex;
    background: #fff;
    border: 1px solid #a8a8a8;
    overflow: hidden;
}

.tree ul {
    flex: 1;
    height: 710px;
    margin: 0;
    padding: 0;
    display: grid;
    grid-auto-rows: 1fr;
    list-style: none;
    background: repeating-linear-gradient(#aaa 0 1px, transparent 1px 3px) 7px 16px / 1px 100% no-repeat;
}

.tree li {
    display: flex;
    align-items: center;
    gap: 6px;
    padding-left: 47px;
    background: repeating-linear-gradient(#aaa 0 1px, transparent 1px 3px) 52px 0 / 1px 100% no-repeat;
    white-space: nowrap;
}

.tree li.root {
    padding-left: 2px;
    background: none;
}

.tree li.model {
    padding-left: 25px;
    background: none;
}

.tree li svg {
    width: 20px;
    height: 20px;
}

.tree b {
    font-weight: normal;
    line-height: 18px;
    border-bottom: 2px solid #000;
}

.tree .box {
    width: 11px;
    height: 11px;
    border: 1px solid #8a8a8a;
    background: linear-gradient(#333, #333) center / 5px 1px no-repeat, linear-gradient(#333, #333) center / 1px 5px no-repeat, #fff;
}

.tree .minus {
    background: linear-gradient(#333, #333) center / 5px 1px no-repeat, #fff;
}

.tree i {
    width: 6px;
    margin: 0 0 0 5px;
    border-top: 1px dotted #aaa;
}

.script-f {
    width: 20px;
    text-align: center;
    font-size: 20px;
    font-weight: bold;
    font-family: "DejaVu Sans", sans-serif;
}

.scroll {
    width: 18px;
    display: flex;
    flex-direction: column;
    background: #f0f0f0;
}

.scroll button {
    height: 22px;
}

.scroll svg {
    width: 14px;
    height: 14px;
    fill: none;
    stroke: #444;
    stroke-width: 2;
}

.thumb {
    height: 511px;
    margin-bottom: auto;
    background: #cdcdcd;
}

/* working area */
.work {
    flex: 1;
    min-width: 0;
    display: flex;
    flex-direction: column;
    padding-left: 10px;
}

.context {
    height: 40px;
    display: flex;
    align-items: center;
    padding: 0 0 2px 7px;
    background: linear-gradient(#fbfbfb, #ebebeb);
}

.context label {
    width: 40px;
}

.framed {
    width: 122px;
    height: 30px;
    margin-right: 17px;
    border: 2px solid #8a8a8a;
    border-bottom-color: #bbb;
    border-right-color: #bbb;
}

.part {
    width: 189px;
}

.spin {
    width: 14px;
    display: flex;
    align-items: center;
    justify-content: center;
    background: #eee;
}

.spin svg {
    width: 8px;
    height: 20px;
}

.stage {
    flex: 1;
    min-height: 0;
    display: flex;
}

.toolbox {
    width: 75px;
    flex: none;
    padding: 4px 2px 0 0;
    background: linear-gradient(to right, #fcfcfc, #efefef);
}

.toolbox div {
    display: grid;
    grid-template-columns: 35px 35px;
    grid-auto-rows: 35px;
    padding: 4px 0 4px 1px;
    border-bottom: 1px solid #a8a8a8;
}

.toolbox div:first-child {
    padding-top: 0;
}

.toolbox div:last-child {
    border: none;
}

.toolbox button {
    position: relative;
}

.toolbox svg {
    width: 28px;
    height: 28px;
    overflow: visible;
}

.toolbox .more {
    position: absolute;
    right: 2px;
    bottom: 1px;
    width: 5px;
    height: 5px;
}

.xyz {
    font: bold 11px "Liberation Sans", sans-serif;
    fill: #222;
}

.view-col {
    flex: 1;
    min-width: 0;
    display: flex;
    flex-direction: column;
}

.viewport {
    flex: 1;
    min-height: 0;
    position: relative;
    box-shadow: inset 1px 1px #555;
    background: linear-gradient(#1b2e48, #24374f 32%, #2c3c58 56%, #3f4f6d 66%, #66758c 79%, #8692ab 90%, #a2adca);
}

.scene {
    width: 100%;
    height: 100%;
}

.caption {
    position: absolute;
    left: 12px;
    top: 8px;
    padding: 5px 31px 3px;
    background: #a5adb5;
    color: #000;
    font-size: 27px;
    font-weight: bold;
    line-height: 40px;
}

.edge {
    stroke: #1c1c1c;
    stroke-width: 1.5;
}

.edge:not([fill]) {
    fill: none;
}

.datum {
    fill: none;
    stroke: #c8cf3c;
    stroke-width: 1.5;
    stroke-dasharray: 6 5 2 5;
}

.axis {
    fill: none;
    stroke: #f6f614;
    stroke-width: 4;
    stroke-dasharray: 5 6 2 6;
}

.rp {
    font-size: 16px;
    fill: #f0f020;
}

.compass path, .compass circle {
    fill: #12586b;
    stroke: #d3d0f5;
    stroke-width: 2;
}

.compass circle {
    fill: #d3c4f8;
}

.compass .handle {
    fill: #d00000;
    stroke: none;
}

.compass text {
    font-size: 15px;
    text-anchor: middle;
    fill: #d8dc2c;
}

.triad path {
    stroke-width: 5;
}

.triad path[fill] {
    stroke: none;
}

.triad text {
    font-size: 18px;
    text-anchor: middle;
    fill: #fff;
}

.prompt {
    height: 45px;
    display: flex;
    align-items: center;
    justify-content: flex-end;
    padding-right: 2px;
    background: linear-gradient(#fefefe, #ececec);
}

.mark {
    margin-right: 30px;
    color: #000;
    font-size: 28px;
    line-height: 40px;
}

.ds {
    width: 28px;
    height: 28px;
    margin-right: 6px;
    fill: none;
    stroke: #25a091;
    stroke-width: 2;
}

.simulia {
    color: #25a091;
    font-family: "DejaVu Sans", sans-serif;
    font-size: 21px;
    font-style: italic;
    font-weight: bold;
}

.views {
    width: 36px;
    height: 395px;
    display: flex;
    flex-direction: column;
    align-items: center;
    align-self: flex-start;
    background: #fcfcfc;
    border-bottom: 1px solid #aaa;
    border-right: 2px solid #ddd;
}

.views .grip {
    width: 18px;
    height: 3px;
    margin: 0;
    background: repeating-linear-gradient(to right, #888 0 3px, transparent 3px 5px);
}

.views button {
    flex: 1;
    width: 34px;
    color: #b3261e;
    font: bold 22px "Liberation Sans", sans-serif;
}

.views svg {
    width: 28px;
    height: 28px;
    overflow: visible;
}

.views text {
    font: bold 11px "Liberation Sans", sans-serif;
    text-anchor: middle;
    fill: #b3261e;
}

.views .tiny {
    font-size: 9px;
}

/* message area */
.messages {
    position: relative;
    height: 112px;
    display: flex;
    padding: 4px 0 3px 3px;
    background: #f3f3f3;
}

.side-tabs {
    width: 48px;
    background: #fff;
    border-top: 1px solid #ccc;
}

.side-tabs button {
    width: 46px;
    height: 45px;
    background: #ececec;
}

.side-tabs .active {
    background: #fff;
}

.side-tabs svg {
    width: 30px;
    height: 30px;
}

.log {
    flex: 1;
    background: #fdfdfd;
    border: 2px solid #b4b4b4;
}

.resize {
    width: 16px;
    height: 16px;
    margin: auto 0 0 7px;
    fill: #aaa;
}

.timer {
    position: absolute;
    right: 77px;
    top: 25px;
    width: 48px;
    height: 48px;
    border: 2px solid #eef8ff;
    border-radius: 50%;
    background: linear-gradient(30deg, #62c8fa, #4488e8);
    box-shadow: 0 2px 5px rgba(0, 0, 0, 0.25);
    color: #fff;
    font-size: 13px;
    line-height: 44px;
    text-align: center;
}

/* taskbar */
.taskbar {
    height: 50px;
    display: flex;
    background: #201f1f;
    color: #fff;
}

.start {
    width: 60px;
}

.start svg {
    width: 22px;
    height: 22px;
}

.search {
    width: 430px;
    display: flex;
    align-items: center;
    gap: 14px;
    padding-left: 14px;
    background: #f0f0f0;
    color: #222;
}

.search svg {
    width: 22px;
    height: 22px;
    fill: none;
    stroke: #222;
    stroke-width: 2;
}

.search input {
    flex: 1;
    min-width: 0;
    padding: 0;
    border: none;
    background: none;
    font-size: 19px;
    line-height: 24px;
}

.search input::placeholder {
    color: #222;
}

.apps {
    display: flex;
}

.apps button {
    position: relative;
    width: 62px;
}

.apps svg {
    width: 30px;
    height: 30px;
}

.apps .run::after {
    content: "";
    position: absolute;
    left: 5px;
    right: 5px;
    bottom: 0;
    height: 3px;
    background: #7db4e4;
}

.apps .current {
    background: #4a4a4a;
}

.apps .current::after {
    left: 0;
    right: 0;
}

.youdao {
    font-size: 12px;
    font-weight: bold;
    text-anchor: middle;
    fill: #fff;
}

.office {
    font-size: 12px;
    font-weight: bold;
    text-anchor: middle;
    fill: #fff;
}

.tray {
    display: flex;
    align-items: center;
    gap: 6px;
    margin-left: auto;
    padding-right: 28px;
}

.tray svg {
    width: 24px;
    height: 24px;
    fill: none;
    stroke: #fff;
    stroke-width: 1.5;
}

.tray .battery {
    width: 60px;
}

.tray .wifi {
    width: 20px;
    height: 20px;
    margin: 0 2px;
    stroke: #ccc;
}

.pct {
    font-size: 12px;
    text-anchor: middle;
    fill: #fff;
    stroke: none;
}

.ime {
    font-size: 20px;
}

.clock {
    width: 88px;
    display: flex;
    flex-direction: column;
    align-items: center;
    font-size: 16px;
    line-height: 23px;
}

.clock + .notice {
    margin-left: 12px;
}
```
